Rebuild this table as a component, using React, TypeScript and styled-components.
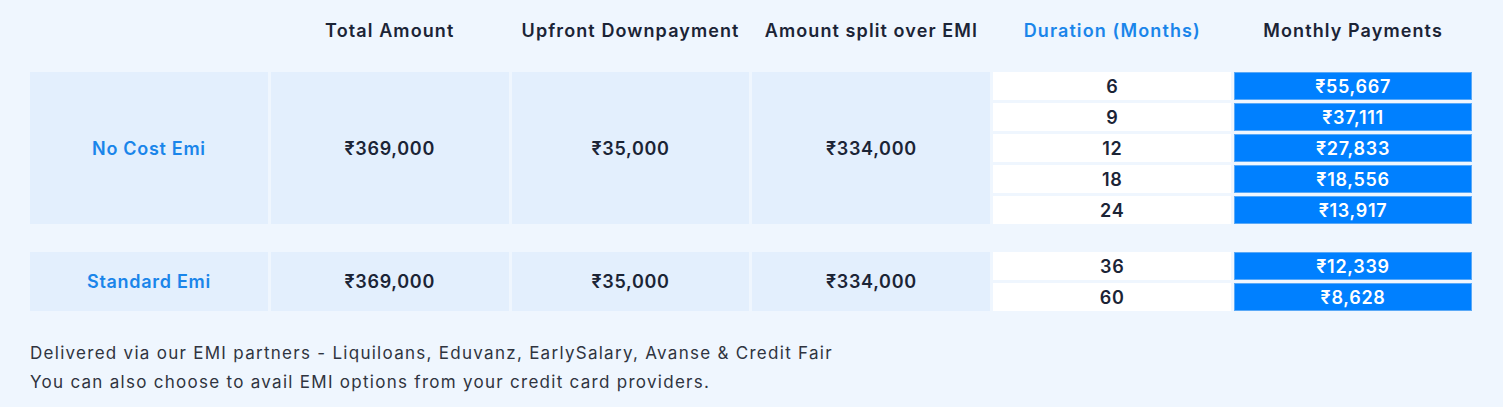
import React from "react";
import styled, { createGlobalStyle } from "styled-components";

const Global = createGlobalStyle`
  html, body { margin: 0; padding: 0; background: #eff6fe; }
  body { font-family: Inter, "Noto Sans", sans-serif; }
`;

const Page = styled.div`
  width: 1503px;
  height: 407px;
  box-sizing: border-box;
  padding: 0 31px 0 30px;
  background: #eff6fe;
  color: #1b2436;
`;

const Grid = styled.div`
  display: grid;
  grid-template-columns: repeat(6, 1fr);
  column-gap: 3px;
  row-gap: 3px;
`;

const HeaderRow = styled(Grid)`
  height: 61px;
  align-items: center;
  margin-bottom: 11px;
`;

const HeadCell = styled.div<{ $accent?: boolean }>`
  text-align: center;
  font-size: 18px;
  font-weight: 600;
  letter-spacing: 1.1px;
  color: ${(p) => (p.$accent ? "#1a85ea" : "#1b2436")};
  white-space: nowrap;
`;

const Group = styled(Grid)<{ $rows: number }>`
  grid-template-rows: repeat(${(p) => p.$rows}, 28px);
  margin-bottom: 28px;
`;

const SpanCell = styled.div<{ $col: number; $rows: number; $accent?: boolean }>`
  grid-column: ${(p) => p.$col};
  grid-row: 1 / span ${(p) => p.$rows};
  background: #e3effd;
  display: flex;
  align-items: center;
  justify-content: center;
  font-size: 18px;
  font-weight: 600;
  letter-spacing: 0.7px;
  color: ${(p) => (p.$accent ? "#1a85ea" : "#1b2436")};
`;

const DurationCell = styled.div<{ $row: number }>`
  grid-column: 5;
  grid-row: ${(p) => p.$row};
  background: #ffffff;
  display: flex;
  align-items: center;
  justify-content: center;
  font-size: 18px;
  font-weight: 600;
  letter-spacing: 0.7px;
  color: #1b2436;
`;

const PayCell = styled.div<{ $row: number }>`
  grid-column: 6;
  grid-row: ${(p) => p.$row};
  background: #0080ff;
  box-shadow: inset 0 0 0 1px #5aa9f7;
  display: flex;
  align-items: center;
  justify-content: center;
  font-size: 18px;
  font-weight: 600;
  letter-spacing: 0.7px;
  color: #ffffff;
`;

const Footer = styled.div`
  margin-top: 0;
  font-size: 17px;
  letter-spacing: 1.28px;
  line-height: 29px;
  color: #2f3440;
`;

type Plan = {
  name: string;
  total: string;
  down: string;
  split: string;
  rows: [string, string][];
};

const plans: Plan[] = [
  {
    name: "No Cost Emi",
    total: "₹369,000",
    down: "₹35,000",
    split: "₹334,000",
    rows: [
      ["6", "₹55,667"],
      ["9", "₹37,111"],
      ["12", "₹27,833"],
      ["18", "₹18,556"],
      ["24", "₹13,917"],
    ],
  },
  {
    name: "Standard Emi",
    total: "₹369,000",
    down: "₹35,000",
    split: "₹334,000",
    rows: [
      ["36", "₹12,339"],
      ["60", "₹8,628"],
    ],
  },
];

export default function App() {
  return (
    <Page>
      <Global />
      <HeaderRow>
        <HeadCell />
        <HeadCell>Total Amount</HeadCell>
        <HeadCell>Upfront Downpayment</HeadCell>
        <HeadCell>Amount split over EMI</HeadCell>
        <HeadCell $accent>Duration (Months)</HeadCell>
        <HeadCell>Monthly Payments</HeadCell>
      </HeaderRow>
      {plans.map((p) => {
        const n = p.rows.length;
        return (
          <Group key={p.name} $rows={n}>
            <SpanCell $col={1} $rows={n} $accent>{p.name}</SpanCell>
            <SpanCell $col={2} $rows={n}>{p.total}</SpanCell>
            <SpanCell $col={3} $rows={n}>{p.down}</SpanCell>
            <SpanCell $col={4} $rows={n}>{p.split}</SpanCell>
            {p.rows.map(([d, m], i) => (
              <React.Fragment key={d}>
                <DurationCell $row={i + 1}>{d}</DurationCell>
                <PayCell $row={i + 1}>{m}</PayCell>
              </React.Fragment>
            ))}
          </Group>
        );
      })}
      <Footer>
        Delivered via our EMI partners - Liquiloans, Eduvanz, EarlySalary, Avanse &amp; Credit Fair
        <br />
        You can also choose to avail EMI options from your credit card providers.
      </Footer>
    </Page>
  );
}
